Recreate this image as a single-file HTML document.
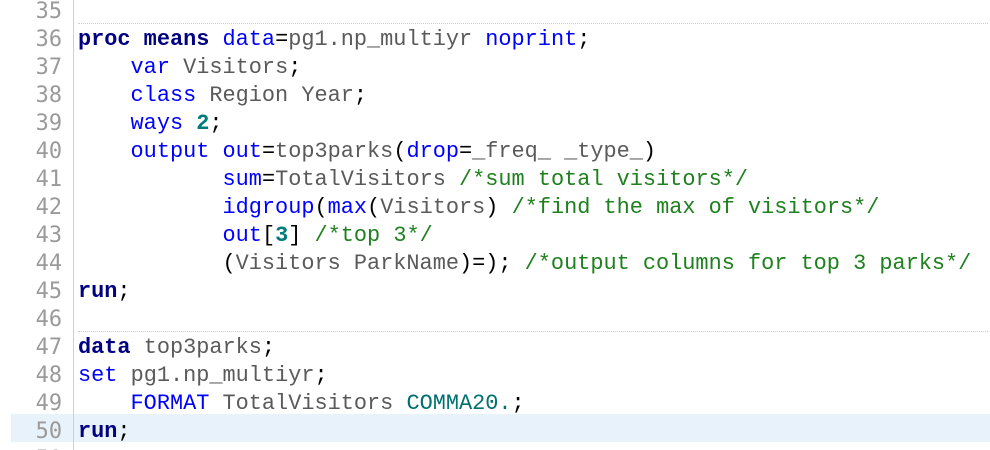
<!DOCTYPE html>
<html><head><meta charset="utf-8"><style>
html,body{margin:0;padding:0;background:#fff;width:990px;height:450px;overflow:hidden}
#w{position:relative;width:990px;height:450px;overflow:hidden}
.g{position:absolute;left:73px;top:0;width:1px;height:450px;background:#d0d0d0}
.hl{position:absolute;left:11px;top:414px;width:979px;height:28px;background:#e8f2fa}
.sep{position:absolute;left:78px;width:910px;height:0;border-top:1px dotted #cfcfcf}
.ln,.c{margin-top:2px}
.ln{position:absolute;left:0;width:62px;text-align:right;font:21.9px/28px "DejaVu Sans Mono","Liberation Mono",monospace;color:#9a9a9a}
.c{position:absolute;left:78px;white-space:pre;font:21.9px/28px "Liberation Mono",monospace;color:#000}
.k{color:#000080;font-weight:bold}.b{color:#0000ff}.i{color:#5a5a5a}.n{color:#007b7b;font-weight:bold}.m{color:#1e801e}.t{color:#007070}
</style></head><body><div id="w">
<div class="hl"></div>
<div class="g"></div>
<div class="sep" style="top:23px"></div>
<div class="sep" style="top:331px"></div>
<div class="ln" style="top:-4px">35</div>
<div class="ln" style="top:24px">36</div>
<div class="ln" style="top:52px">37</div>
<div class="ln" style="top:80px">38</div>
<div class="ln" style="top:108px">39</div>
<div class="ln" style="top:136px">40</div>
<div class="ln" style="top:164px">41</div>
<div class="ln" style="top:192px">42</div>
<div class="ln" style="top:220px">43</div>
<div class="ln" style="top:248px">44</div>
<div class="ln" style="top:276px">45</div>
<div class="ln" style="top:304px">46</div>
<div class="ln" style="top:332px">47</div>
<div class="ln" style="top:360px">48</div>
<div class="ln" style="top:388px">49</div>
<div class="ln" style="top:416px">50</div>
<div class="ln" style="top:444px;height:4px;overflow:hidden">51</div>
<div class="c" style="top:24px"><span class="k">proc means</span> <span class="b">data</span>=<span class="i">pg1.np_multiyr</span> <span class="b">noprint</span>;</div>
<div class="c" style="top:52px">    <span class="b">var</span> <span class="i">Visitors</span>;</div>
<div class="c" style="top:80px">    <span class="b">class</span> <span class="i">Region Year</span>;</div>
<div class="c" style="top:108px">    <span class="b">ways</span> <span class="n">2</span>;</div>
<div class="c" style="top:136px">    <span class="b">output</span> <span class="b">out</span>=<span class="i">top3parks</span>(<span class="b">drop</span>=<span class="i">_freq_ _type_</span>)</div>
<div class="c" style="top:164px">           <span class="b">sum</span>=<span class="i">TotalVisitors</span> <span class="m">/*sum total visitors*/</span></div>
<div class="c" style="top:192px">           <span class="b">idgroup</span>(<span class="b">max</span>(<span class="i">Visitors</span>) <span class="m">/*find the max of visitors*/</span></div>
<div class="c" style="top:220px">           <span class="b">out</span>[<span class="n">3</span>] <span class="m">/*top 3*/</span></div>
<div class="c" style="top:248px">           (<span class="i">Visitors ParkName</span>)=); <span class="m">/*output columns for top 3 parks*/</span></div>
<div class="c" style="top:276px"><span class="k">run</span>;</div>
<div class="c" style="top:332px"><span class="k">data</span> <span class="i">top3parks</span>;</div>
<div class="c" style="top:360px"><span class="b">set</span> <span class="i">pg1.np_multiyr</span>;</div>
<div class="c" style="top:388px">    <span class="b">FORMAT</span> <span class="i">TotalVisitors</span> <span class="t">COMMA20.</span>;</div>
<div class="c" style="top:416px"><span class="k">run</span>;</div>
</div></body></html>
